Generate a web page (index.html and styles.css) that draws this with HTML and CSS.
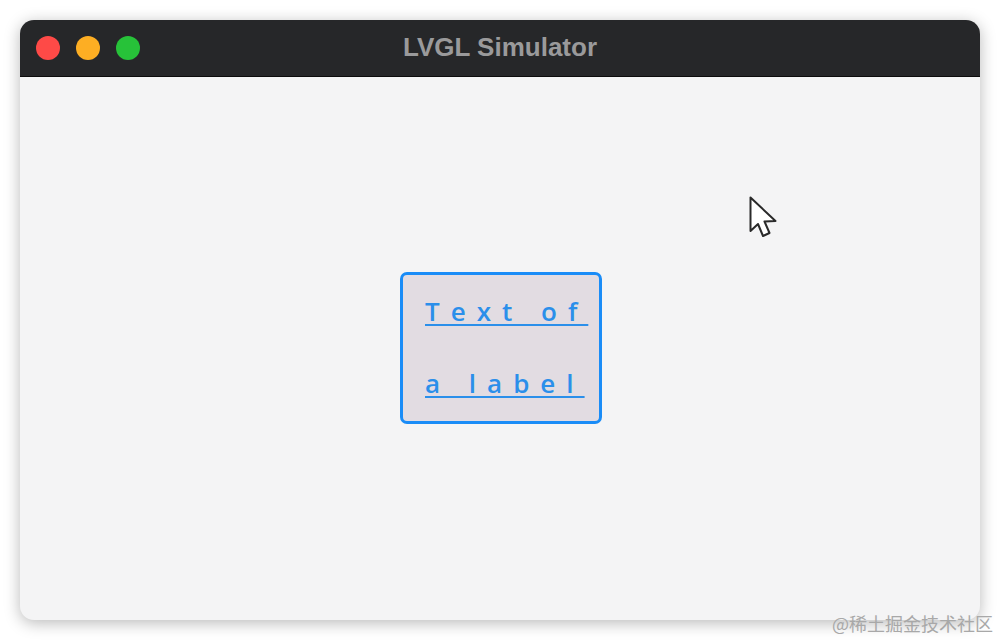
FILE: index.html
```html
<!DOCTYPE html>
<html lang="en">
<head>
<meta charset="utf-8">
<title>LVGL Simulator</title>
<link rel="stylesheet" href="styles.css">
</head>
<body>
<div class="window">
  <div class="titlebar">
    <div class="lights">
      <span class="light red"></span>
      <span class="light yellow"></span>
      <span class="light green"></span>
    </div>
    <div class="title">LVGL Simulator</div>
  </div>
  <div class="screen">
    <div class="label-box">
      <span class="label-text">Text of<br>a label</span>
    </div>
    <svg class="cursor" width="32" height="44" viewBox="0 0 32 44">
      <path d="M1.5 1.5 L1.5 35 L9 28 L14 40 L20.5 37 L15.5 25.5 L26.5 25 Z" fill="#ffffff" stroke="#2a2a2a" stroke-width="2" stroke-linejoin="round"/>
    </svg>
  </div>
</div>
<div class="watermark">@稀土掘金技术社区</div>
</body>
</html>
```
FILE: styles.css
```css
html, body {
  margin: 0;
  padding: 0;
  background: #ffffff;
}
body {
  width: 1000px;
  height: 640px;
  position: relative;
  overflow: hidden;
  padding: 20px;
  box-sizing: border-box;
}
.window {
  width: 960px;
  height: 600px;
  border-radius: 14px;
  overflow: hidden;
  background: #f4f4f5;
  box-shadow: 0 3px 16px rgba(0, 0, 0, 0.28);
  display: flex;
  flex-direction: column;
}
.titlebar {
  height: 57px;
  flex: none;
  background: #262729;
  border-bottom: 1px solid #0c0c0c;
  box-sizing: border-box;
  position: relative;
  display: flex;
  align-items: center;
  justify-content: center;
}
.lights {
  position: absolute;
  left: 16px;
  top: 16px;
  display: flex;
  gap: 16px;
}
.light {
  width: 24px;
  height: 24px;
  border-radius: 50%;
  display: block;
}
.red { background: #fe4a47; }
.yellow { background: #fdae23; }
.green { background: #27c239; }
.title {
  font-family: "Liberation Sans", Arial, sans-serif;
  font-weight: bold;
  font-size: 26px;
  color: #9a9a9b;
  line-height: 30px;
  margin-top: -2px;
}
.screen {
  flex: 1;
  position: relative;
  display: flex;
  align-items: center;
  justify-content: center;
}
.label-box {
  width: 202px;
  height: 152px;
  box-sizing: border-box;
  border: 3px solid #1a8cf7;
  border-radius: 7px;
  background: #e2dce2;
  padding: 0 10px 2px 22px;
  margin: -1px 0 0 2px;
}
.label-text {
  display: block;
  font-family: "Open Sans", "Noto Sans", sans-serif;
  font-weight: 600;
  font-size: 26px;
  line-height: 72px;
  letter-spacing: 11px;
  color: #2b8fea;
  text-decoration: underline;
  text-decoration-thickness: 2px;
  text-underline-offset: 3px;
  white-space: nowrap;
}
.cursor {
  position: absolute;
  left: 729px;
  top: 119px;
}
.watermark {
  position: absolute;
  right: 7px;
  bottom: 6px;
  font-family: "Noto Sans CJK SC", sans-serif;
  font-size: 18px;
  line-height: 22px;
  color: #a8a8a8;
}
```
